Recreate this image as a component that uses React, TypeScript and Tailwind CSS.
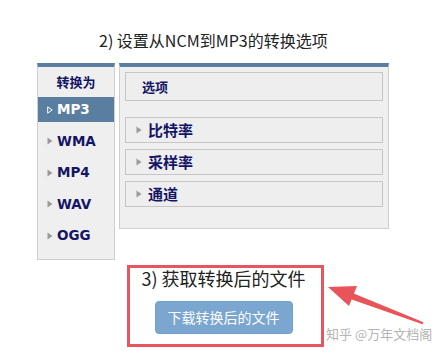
import React from 'react';

const formats = ['MP3', 'WMA', 'MP4', 'WAV', 'OGG'];
const options = ['比特率', '采样率', '通道'];

function Tri({ hollow }: { hollow?: boolean }) {
  return (
    <svg width="6" height="8" viewBox="0 0 6 8" className="shrink-0">
      {hollow ? (
        <path d="M0.7 0.8 L5.2 4 L0.7 7.2 Z" fill="none" stroke="#ffffff" strokeWidth="1" />
      ) : (
        <path d="M0.5 0.5 L5.5 4 L0.5 7.5 Z" fill="#9a9a9a" />
      )}
    </svg>
  );
}

export default function App() {
  return (
    <div
      className="relative w-[447px] h-[354px] bg-white overflow-hidden"
      style={{ fontFamily: '"Noto Sans CJK SC", "Noto Sans", sans-serif' }}
    >
      {/* Step 2 title */}
      <div className="pt-[29px] h-[63px] pl-[99px] text-[16px] leading-[22px] text-[#222] whitespace-nowrap">
        2) 设置从NCM到MP3的转换选项
      </div>

      <div className="flex items-start gap-[4px] pl-[37px]">
        {/* format list */}
        <div className="w-[78px] h-[197px] border-t-4 border-t-[#5a7ea0] border-x border-b border-[#cfcfcf] bg-[#efefef]">
          <div className="h-[30px] flex items-center justify-center text-[13px] font-bold text-[#151566]">
            转换为
          </div>
          <div className="flex flex-col gap-[6.5px]">
            {formats.map((f, i) => (
              <div
                key={f}
                className={
                  i === 0
                    ? 'h-[25px] flex items-center gap-[4px] pl-[9px] bg-[#5a7ea0] text-white'
                    : 'h-[25px] flex items-center gap-[4px] pl-[9px] text-[#151566]'
                }
                style={{ fontFamily: '"DejaVu Sans", Verdana, sans-serif' }}
              >
                <Tri hollow={i === 0} />
                <span className="text-[13.5px] font-bold">{f}</span>
              </div>
            ))}
          </div>
        </div>

        {/* options panel */}
        <div className="w-[270px] h-[166px] border-t-4 border-t-[#5a7ea0] border-x border-b border-[#cfcfcf] bg-[#efefef] px-[5px] pt-[5px]">
          <div className="h-[29px] flex items-center pl-[16px] border border-[#c6c6c6] bg-[#eeeeee] text-[13px] font-bold text-[#151566]">
            选项
          </div>
          <div className="mt-[16px] flex flex-col gap-[6px]">
            {options.map((o) => (
              <div
                key={o}
                className="h-[26px] flex items-center gap-[6px] pl-[10px] border border-[#c6c6c6] bg-[#eeeeee]"
              >
                <Tri />
                <span className="text-[15px] font-bold text-[#151566]">{o}</span>
              </div>
            ))}
          </div>
        </div>
      </div>

      {/* Step 3 highlighted box */}
      <div className="mt-[5px] ml-[127px] w-[197px] h-[82px] border-[3px] border-[#e9555c] flex flex-col items-center">
        <div className="text-[18px] leading-[20px] text-[#222] mr-[4px]">3) 获取转换后的文件</div>
        <div className="mt-[13px] w-[138px] h-[33px] rounded-[4px] bg-[#7ba6d0] border border-[#72a0cc] flex items-center justify-center text-[14px] text-white mr-[4px]">
          下载转换后的文件
        </div>
      </div>

      {/* red arrow */}
      <svg className="absolute left-0 top-0" width="447" height="354" viewBox="0 0 447 354">
        <polygon points="328,287 357,286 349,306" fill="#e9535a" />
        <polygon points="351.9,292.7 423.5,322.3 422.5,324.2 349.6,298.8" fill="#e9535a" />
      </svg>

      {/* watermark */}
      <div className="absolute left-[326px] top-[325px] text-[13px] leading-[18px] text-[#b4b4b4] whitespace-nowrap">
        知乎 @万年文档阁
      </div>
    </div>
  );
}
